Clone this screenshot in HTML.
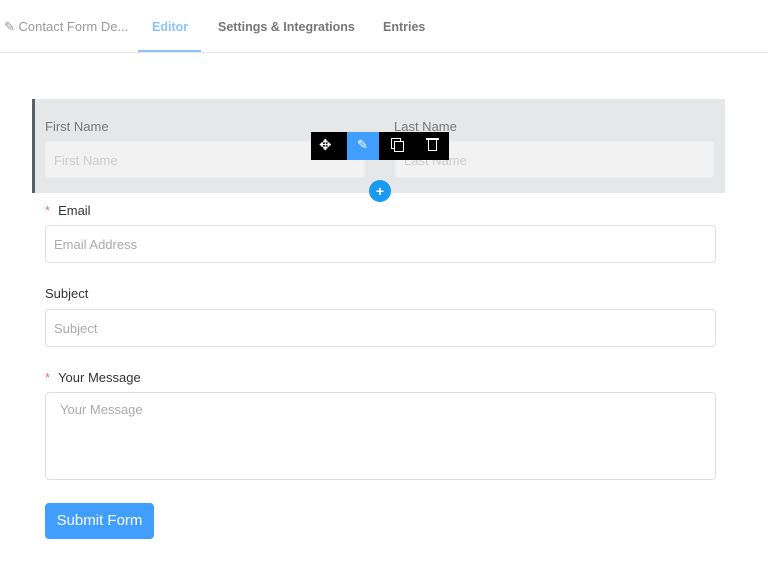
<!DOCTYPE html>
<html><head><style>
*{box-sizing:border-box;margin:0;padding:0}
body{width:768px;height:562px;background:#fff;font-family:"Liberation Sans",sans-serif;position:relative;overflow:hidden;color:#606266}
.a{position:absolute}
.nav{font-size:12.5px;font-weight:bold;color:#777;top:20px}
.inp{position:absolute;border:1px solid #dcdfe6;border-radius:4px;background:#fff;font-size:13px;color:#aaa;padding-left:8px}
.lbl{position:absolute;font-size:13px;color:#333}
.req{color:#f56c6c;margin-right:8px}
</style></head><body>
<div class="a" style="left:0;top:52px;width:768px;height:1px;background:#e4e7ed"></div>
<div class="a" style="left:4px;top:19px;font-size:13px;color:#999">✎ Contact Form De...</div>
<div class="a nav" style="left:152px;color:#8cc4f7">Editor</div>
<div class="a" style="left:138px;top:50px;width:63px;height:2px;background:#8cc4f7"></div>
<div class="a nav" style="left:218px">Settings &amp; Integrations</div>
<div class="a nav" style="left:383px">Entries</div>

<div class="a" style="left:32px;top:99px;width:693px;height:94px;background:#e6e7e9;border-left:3px solid #5a5f66"></div>
<div class="lbl" style="left:45px;top:119px;color:#777">First Name</div>
<div class="lbl" style="left:394px;top:119px;color:#777">Last Name</div>
<div class="inp" style="left:45px;top:141px;width:320px;height:37px;background:#f2f2f2;border-color:#eee;line-height:37px;color:#ccc">First Name</div>
<div class="inp" style="left:395px;top:141px;width:319px;height:37px;background:#f2f2f2;border-color:#eee;line-height:37px;color:#ccc">Last Name</div>
<div class="a" style="left:311px;top:132px;width:138px;height:28px;background:#000"></div>
<div class="a" style="left:347px;top:132px;width:32px;height:28px;background:#409eff"></div>
<div class="a" style="left:319px;top:136px;color:#fff;font-size:15px">✥</div>
<div class="a" style="left:357px;top:137px;color:#fff;font-size:13px">✎</div>
<div class="a" style="left:391px;top:138px;width:10px;height:11px;border:1.5px solid #fff"></div>
<div class="a" style="left:394px;top:141px;width:10px;height:11px;border:1.5px solid #fff;background:#000"></div>
<div class="a" style="left:428px;top:140px;width:9px;height:11px;border:1.5px solid #fff;border-top:none"></div>
<div class="a" style="left:426px;top:138px;width:13px;height:2px;background:#fff"></div>
<div class="a" style="left:369px;top:180px;width:22px;height:22px;border-radius:50%;background:#1a9af0;color:#fff;text-align:center;line-height:22px;font-size:14px;font-weight:bold">+</div>

<div class="lbl" style="left:45px;top:203px"><span class="req">*</span>Email</div>
<div class="inp" style="left:45px;top:225px;width:671px;height:38px;line-height:38px">Email Address</div>
<div class="lbl" style="left:45px;top:286px">Subject</div>
<div class="inp" style="left:45px;top:309px;width:671px;height:38px;line-height:38px">Subject</div>
<div class="lbl" style="left:45px;top:370px"><span class="req">*</span>Your Message</div>
<div class="inp" style="left:45px;top:392px;width:671px;height:88px;padding:9px 14px">Your Message</div>
<div class="a" style="left:45px;top:503px;width:109px;height:36px;background:#409eff;border-radius:4px;color:#fff;font-size:15px;text-align:center;line-height:36px">Submit Form</div>
</body></html>
